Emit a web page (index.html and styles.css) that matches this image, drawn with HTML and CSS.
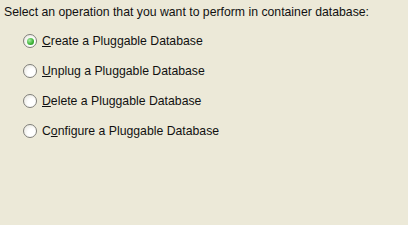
FILE: index.html
```html
<!DOCTYPE html>
<html lang="en">
  <head>
    <meta charset="UTF-8" />
    <title>Pluggable Database Operations</title>
    <link rel="stylesheet" href="styles.css">
  </head>
  <body>
    <main class="panel">
      <p class="prompt">Select an operation that you want to perform in container database:</p>
      <ul class="options">
        <li class="option">
          <span class="radio checked"><span class="dot"></span></span>
          <span class="label"><u>C</u>reate a Pluggable Database</span>
        </li>
        <li class="option">
          <span class="radio"></span>
          <span class="label"><u>U</u>nplug a Pluggable Database</span>
        </li>
        <li class="option">
          <span class="radio"></span>
          <span class="label"><u>D</u>elete a Pluggable Database</span>
        </li>
        <li class="option">
          <span class="radio"></span>
          <span class="label">C<u>o</u>nfigure a Pluggable Database</span>
        </li>
      </ul>
    </main>
  </body>
</html>
```

FILE: styles.css
```css
* {
  margin: 0;
  padding: 0;
  box-sizing: border-box;
}

body {
  background-color: #ECE9D8;
  color: #111;
  font-family: "Liberation Sans", Arial, sans-serif;
  font-size: 12.25px;
  width: 408px;
  height: 225px;
  overflow: hidden;
}

.panel {
  padding: 5px 0 0 4px;
}

.prompt {
  line-height: 14px;
}

.options {
  list-style: none;
  margin-top: 7px;
  padding-left: 19px;
}

.option {
  display: flex;
  align-items: center;
  gap: 5px;
  height: 30px;
}

.radio {
  width: 14px;
  height: 14px;
  border-radius: 50%;
  border: 1px solid #7f7f7a;
  background: radial-gradient(circle at 65% 65%, #ffffff 35%, #e2e0d6 100%);
  display: flex;
  align-items: center;
  justify-content: center;
}

.dot {
  width: 7px;
  height: 7px;
  border-radius: 50%;
  background: radial-gradient(circle at 35% 35%, #a6ec9f 0%, #3cb136 60%, #22861e 100%);
}

.label u {
  text-decoration: underline;
}
```
